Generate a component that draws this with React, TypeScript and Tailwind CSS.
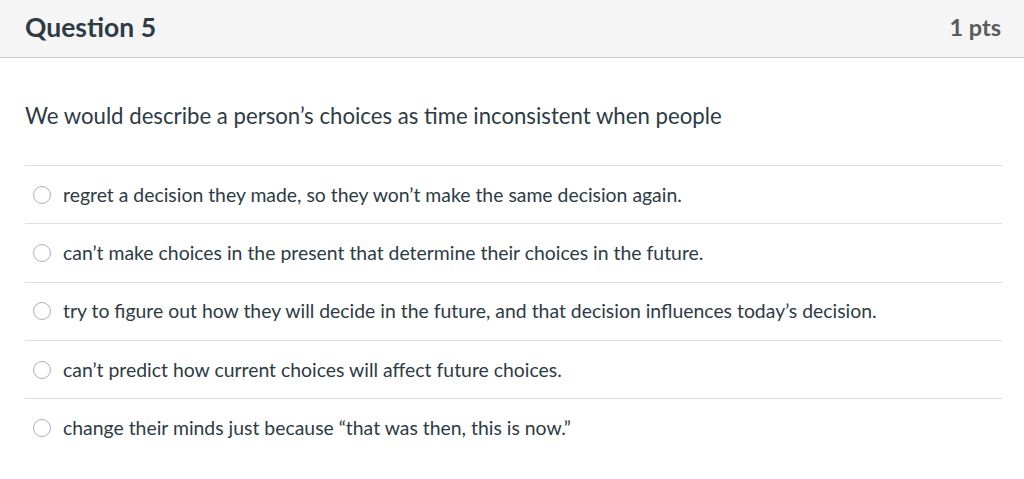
const answers = [
  'regret a decision they made, so they won\u2019t make the same decision again.',
  'can\u2019t make choices in the present that determine their choices in the future.',
  'try to figure out how they will decide in the future, and that decision influences today\u2019s decision.',
  'can\u2019t predict how current choices will affect future choices.',
  'change their minds just because \u201cthat was then, this is now.\u201d',
];

export default function App() {
  return (
    <div className="w-[1024px] h-[479px] bg-white font-['Lato',sans-serif] text-[#2d3b45] overflow-hidden">
      {/* Header */}
      <div className="h-[58px] bg-[#f5f5f5] border-b border-[#c7cdd1] flex items-center justify-between pl-[25px] pr-[23px] pb-[3px]">
        <h2 className="text-[26.5px] leading-[32px] font-bold text-[#2d3b45]">Question 5</h2>
        <span className="text-[23.5px] leading-[30px] font-bold text-[#5b5b5b]">1 pts</span>
      </div>

      {/* Body */}
      <div className="pl-[25px] pr-[22px]">
        <p className="pt-[44px] pb-[35px] text-[22.2px] leading-[28px]">
          We would describe a person’s choices as time inconsistent when people
        </p>
        <div>
          {answers.map((a, i) => (
            <div
              key={i}
              className="h-[58.3px] border-t border-[#dcdfe2] flex items-center"
            >
              <span className="w-[18px] h-[18px] rounded-full border border-[#a9b0b5] bg-white ml-[8px] mr-[12px] shrink-0" />
              <span className="text-[19.4px] leading-[24px]">{a}</span>
            </div>
          ))}
        </div>
      </div>
    </div>
  );
}
